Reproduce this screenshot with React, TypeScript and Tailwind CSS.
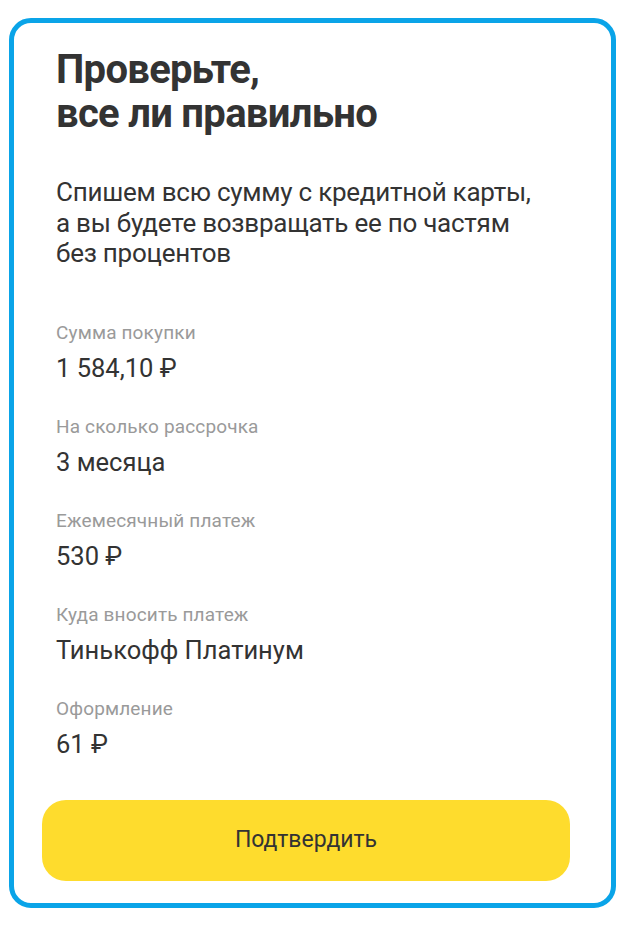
const DETAILS = [
  { label: "Сумма покупки", value: "1 584,10 ₽" },
  { label: "На сколько рассрочка", value: "3 месяца" },
  { label: "Ежемесячный платеж", value: "530 ₽" },
  { label: "Куда вносить платеж", value: "Тинькофф Платинум" },
  { label: "Оформление", value: "61 ₽" },
];

export default function App() {
  return (
    <div
      className="w-[626px] h-[928px] bg-white pt-[18px] pl-[9px] pr-[10px] pb-[20px]"
      style={{ fontFamily: "Roboto, 'Noto Sans', sans-serif" }}
    >
      <div className="h-full rounded-[22px] border-[5px] border-[#0aa4e8] flex flex-col">
        <div className="pl-[42px] pr-6 pt-[25px]">
          <h1 className="text-[40px] leading-[44px] font-bold text-[#333333] tracking-[-0.7px]">
            Проверьте,
            <br />
            все ли правильно
          </h1>
          <p className="mt-[41px] text-[26px] leading-[30.5px] text-[#333333] tracking-[-0.25px]">
            Спишем всю сумму с кредитной карты,
            <br />
            а вы будете возвращать ее по частям
            <br />
            без процентов
          </p>
          <dl className="mt-[53px] flex flex-col gap-[33px]">
            {DETAILS.map((item) => (
              <div key={item.label}>
                <dt className="text-[19px] leading-[22px] text-[#9a9a9a] tracking-[0.15px]">
                  {item.label}
                </dt>
                <dd className="mt-[9px] text-[25.5px] leading-[30px] text-[#333333]">
                  {item.value}
                </dd>
              </div>
            ))}
          </dl>
        </div>
        <button className="mt-auto mb-[22px] ml-[28px] mr-[41px] h-[81px] rounded-[24px] bg-[#fedc2d] text-[23px] text-[#333333]">
          Подтвердить
        </button>
      </div>
    </div>
  );
}
